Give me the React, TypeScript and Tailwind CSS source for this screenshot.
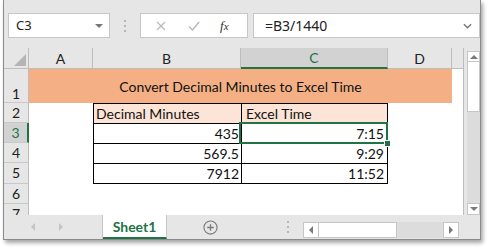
import React from 'react';

const GREEN = '#217346';

const cols = [
  { key: 'A', w: 'w-[64px]' },
  { key: 'B', w: 'w-[148px]' },
  { key: 'C', w: 'w-[147px]' },
  { key: 'D', w: 'w-[64px]' },
];

const data = [
  { row: 3, min: '435', time: '7:15' },
  { row: 4, min: '569.5', time: '9:29' },
  { row: 5, min: '7912', time: '11:52' },
];

const RowHead: React.FC<{ n: number; h: string; active?: boolean; bottom?: boolean }> = ({
  n,
  h,
  active,
  bottom,
}) => (
  <div
    className={`w-[25px] shrink-0 ${h} flex justify-center border-b border-[#c8c8c8] ${
      bottom ? 'items-end pb-[1px]' : 'items-center'
    } ${active ? 'bg-[#d2d2d2] text-[#217346] border-r-2 border-r-[#217346]' : 'bg-[#e6e6e6] border-r border-r-[#bdbdbd] text-[#222]'}`}
  >
    <span className="text-[14px] leading-none">{n}</span>
  </div>
);

const Tri: React.FC<{ dir: 'up' | 'down' | 'left' | 'right'; color?: string }> = ({ dir, color = '#7a7a7a' }) => {
  const pts = {
    up: '0,5 4,1 8,5',
    down: '0,1 4,5 8,1',
    left: '5,0 1,4 5,8',
    right: '1,0 5,4 1,8',
  }[dir];
  const vb = dir === 'up' || dir === 'down' ? '0 0 8 6' : '0 0 6 8';
  const size = dir === 'up' || dir === 'down' ? 'w-[8px] h-[6px]' : 'w-[6px] h-[8px]';
  return (
    <svg viewBox={vb} className={size}>
      <polygon points={pts} fill={color} />
    </svg>
  );
};

const Dots: React.FC = () => (
  <div className="flex flex-col gap-[3px]">
    <div className="w-[2px] h-[2px] bg-[#b5b5b5]" />
    <div className="w-[2px] h-[2px] bg-[#b5b5b5]" />
    <div className="w-[2px] h-[2px] bg-[#b5b5b5]" />
  </div>
);

export default function App() {
  return (
    <div className="w-[490px] h-[250px] bg-white" style={{ fontFamily: 'Lato, "Liberation Sans", sans-serif' }}>
      <div className="ml-[3px] w-[478px] h-[240px] flex flex-col bg-[#e6e6e6] border-x border-b border-[#8a8a8a] shadow-[2px_3px_4px_rgba(0,0,0,0.35)]">
        {/* Formula bar */}
        <div className="h-[48px] shrink-0 flex items-start pt-[13px] pl-[4px]">
          <div className="w-[102px] h-[25px] bg-white border border-[#c6c6c6] flex items-center justify-between pl-[7px] pr-[6px]">
            <span className="text-[13px] text-[#222]" style={{ fontFamily: '"Noto Sans", sans-serif' }}>
              C3
            </span>
            <Tri dir="down" color="#777" />
          </div>
          <div className="w-[30px] h-[25px] flex items-center justify-center">
            <Dots />
          </div>
          <div className="w-[108px] h-[25px] bg-white border border-[#c6c6c6] flex items-center">
            <svg viewBox="0 0 10 10" className="w-[10px] h-[10px] ml-[15px]">
              <path d="M1 1L9 9M9 1L1 9" stroke="#b8b8b8" strokeWidth="1.2" fill="none" />
            </svg>
            <svg viewBox="0 0 12 10" className="w-[12px] h-[10px] ml-[22px]">
              <path d="M1 5.5L4.5 9L11 1" stroke="#b8b8b8" strokeWidth="1.4" fill="none" />
            </svg>
            <span
              className="ml-[20px] text-[13px] italic text-[#333]"
              style={{ fontFamily: '"Liberation Serif", serif' }}
            >
              <i>f</i>
              <span className="text-[11px]">x</span>
            </span>
          </div>
          <div className="w-[5px]" />
          <div className="w-[227px] h-[25px] bg-white border border-[#c6c6c6] flex items-center justify-between pl-[11px] pr-[7px]">
            <span className="text-[14px] text-[#222]" style={{ fontFamily: '"Noto Sans", sans-serif' }}>
              =B3/1440
            </span>
            <svg viewBox="0 0 10 6" className="w-[9px] h-[6px]">
              <path d="M1 1L5 5L9 1" stroke="#777" strokeWidth="1.6" fill="none" />
            </svg>
          </div>
        </div>

        {/* Sheet area */}
        <div className="h-[167px] shrink-0 flex">
          <div className="w-[460px] shrink-0 flex flex-col bg-white border-r border-[#bdbdbd] relative overflow-hidden">
            {/* Column headers */}
            <div className="h-[21px] shrink-0 flex bg-[#e6e6e6]">
              <div className="w-[25px] shrink-0 border-r border-b border-[#bdbdbd] flex items-end justify-end p-[2px]">
                <svg viewBox="0 0 12 12" className="w-[12px] h-[12px]">
                  <polygon points="12,0 12,12 0,12" fill="#b4b4b4" />
                </svg>
              </div>
              {cols.map((c) => (
                <div
                  key={c.key}
                  className={`${c.w} shrink-0 flex items-center justify-center border-r border-[#bdbdbd] text-[14px] ${
                    c.key === 'C'
                      ? 'bg-[#d2d2d2] text-[#217346] border-b-2 border-b-[#217346]'
                      : 'text-[#222] border-b border-b-[#bdbdbd]'
                  }`}
                >
                  {c.key}
                </div>
              ))}
              <div className="flex-1 border-b border-[#bdbdbd]" />
            </div>

            {/* Row 1 */}
            <div className="h-[34px] shrink-0 flex">
              <RowHead n={1} h="h-[34px]" bottom />
              <div className="w-[423px] shrink-0 bg-[#f4b084] flex items-center justify-center text-[14px] text-[#111]">
                Convert Decimal Minutes to Excel Time
              </div>
            </div>

            {/* Row 2 */}
            <div className="h-[20px] shrink-0 flex">
              <RowHead n={2} h="h-[20px]" />
              <div className="w-[64px] shrink-0" />
              <div className="w-[148px] shrink-0 border-t border-l border-black bg-[#fce4d6] flex items-center pl-[2px] text-[14px] text-[#111]">
                Decimal Minutes
              </div>
              <div className="w-[147px] shrink-0 border-t border-l border-r border-black bg-[#fce4d6] flex items-center pl-[4px] text-[14px] text-[#111]">
                Excel Time
              </div>
            </div>

            {/* Rows 3-5 */}
            {data.map((d, i) => (
              <div key={d.row} className={`${i === 2 ? 'h-[21px]' : 'h-[20px]'} shrink-0 flex`}>
                <RowHead n={d.row} h={i === 2 ? 'h-[21px]' : 'h-[20px]'} active={d.row === 3} />
                <div className="w-[64px] shrink-0" />
                <div
                  className={`w-[148px] shrink-0 border-t border-l border-black flex items-center justify-end pr-[2px] text-[14px] text-[#111] ${
                    i === 2 ? 'border-b' : ''
                  }`}
                >
                  {d.min}
                </div>
                <div
                  className={`w-[147px] shrink-0 border-t border-l border-r border-black flex items-center justify-end pr-[3px] text-[14px] text-[#111] ${
                    i === 2 ? 'border-b' : ''
                  }`}
                >
                  {d.time}
                </div>
              </div>
            ))}

            {/* Rows 6-7 */}
            <div className="h-[20px] shrink-0 flex">
              <RowHead n={6} h="h-[20px]" />
            </div>
            <div className="h-[20px] shrink-0 flex">
              <RowHead n={7} h="h-[20px]" />
            </div>

            {/* Selection C3 */}
            <div className="absolute left-[235px] top-[74px] w-[149px] h-[22px] border-2 border-[#217346] pointer-events-none" />
            <div className="absolute left-[380px] top-[92px] w-[5px] h-[5px] bg-[#217346] border border-white box-content" />
          </div>

          {/* Vertical scrollbar */}
          <div className="w-[3px] shrink-0" />
          <div className="w-[13px] shrink-0 flex flex-col pt-[3px]">
            <div className="h-[11px] bg-white border border-[#c6c6c6] flex items-center justify-center">
              <Tri dir="up" />
            </div>
            <div className="h-[50px] bg-white border-x border-b border-[#c6c6c6]" />
            <div className="flex-1 bg-[#dcdcdc]" />
            <div className="h-[12px] bg-white border border-[#c6c6c6] flex items-center justify-center">
              <Tri dir="down" />
            </div>
          </div>
        </div>

        {/* Sheet tabs */}
        <div className="flex-1 flex items-stretch">
          <div className="w-[99px] shrink-0 flex items-center border-r border-[#c6c6c6]">
            <div className="ml-[26px]">
              <Tri dir="left" color="#c4c4c4" />
            </div>
            <div className="ml-[22px]">
              <Tri dir="right" color="#c4c4c4" />
            </div>
          </div>
          <div
            className="w-[64px] shrink-0 bg-white border-r border-[#c6c6c6] border-b-2 border-b-[#217346] flex items-center justify-center text-[14px] font-bold text-[#217346]"
          >
            Sheet1
          </div>
          <div className="w-[60px] shrink-0 flex items-center justify-center">
            <svg viewBox="0 0 16 16" className="w-[15px] h-[15px] ml-[26px]">
              <circle cx="8" cy="8" r="7" stroke="#7a7a7a" strokeWidth="1.2" fill="none" />
              <path d="M8 4.5V11.5M4.5 8H11.5" stroke="#7a7a7a" strokeWidth="1.4" />
            </svg>
          </div>
          <div className="w-[76px] shrink-0 flex items-center justify-end pr-[14px]">
            <Dots />
          </div>
          <div className="flex items-start pt-[7px]">
            <div className="w-[16px] h-[16px] bg-white border border-[#c6c6c6] flex items-center justify-center">
              <Tri dir="left" />
            </div>
            <div className="w-[78px] h-[16px] bg-white border-y border-r border-[#c6c6c6]" />
            <div className="w-[46px] h-[16px] bg-[#dcdcdc]" />
            <div className="w-[16px] h-[16px] bg-white border border-[#c6c6c6] flex items-center justify-center">
              <Tri dir="right" />
            </div>
          </div>
        </div>
      </div>
    </div>
  );
}
